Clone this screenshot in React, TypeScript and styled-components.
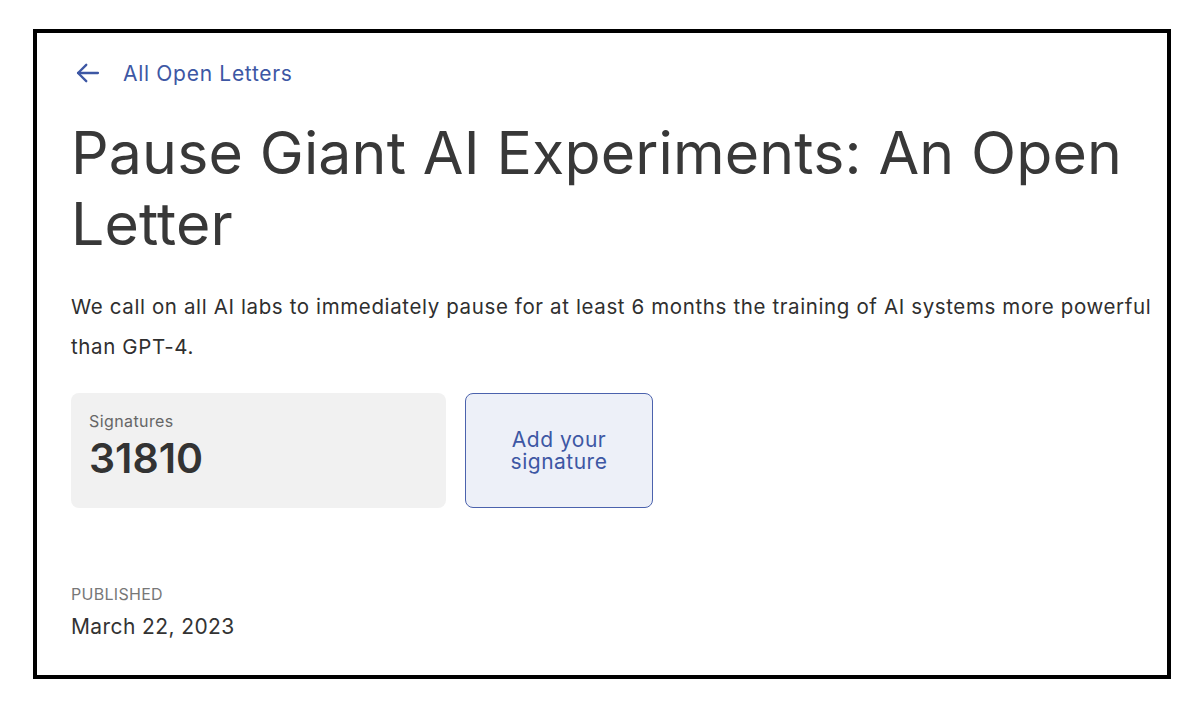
import React from 'react'
import styled, { createGlobalStyle } from 'styled-components'

const Global = createGlobalStyle`
  body {
    margin: 0;
    background: #ffffff;
    font-family: Inter, "Noto Sans", sans-serif;
  }
`

const Frame = styled.div`
  box-sizing: border-box;
  margin: 29px 0 0 33px;
  width: 1138px;
  height: 650px;
  border: 4px solid #000;
  background: #fff;
  padding: 26px 0 0 34px;
`

const BackLink = styled.a`
  display: flex;
  align-items: center;
  gap: 21px;
  color: #3d57a4;
  font-size: 21px;
  letter-spacing: 0.7px;
  text-decoration: none;
  height: 28px;
  padding-left: 3px;
`

const Title = styled.h1`
  margin: 30px 0 0;
  font-size: 59px;
  font-weight: 400;
  line-height: 71px;
  color: #383838;
  letter-spacing: 0.15px;
`

const Lead = styled.p`
  margin: 28px 0 0;
  font-size: 20.5px;
  letter-spacing: 0.62px;
  line-height: 40px;
  color: #2f2f2f;
`

const Actions = styled.div`
  display: flex;
  gap: 19px;
  margin-top: 26px;
`

const Counter = styled.div`
  box-sizing: border-box;
  width: 375px;
  height: 115px;
  background: #f1f1f1;
  border-radius: 8px;
  padding: 18px 18px;
`

const CounterLabel = styled.div`
  font-size: 16px;
  letter-spacing: 0.4px;
  color: #666;
  line-height: 20px;
`

const CounterValue = styled.div`
  font-size: 41px;
  font-weight: 600;
  color: #333;
  line-height: 48px;
  margin-top: 3px;
`

const SignButton = styled.button`
  box-sizing: border-box;
  width: 188px;
  height: 115px;
  background: #edf0f8;
  border: 1px solid #4b62ad;
  border-radius: 8px;
  color: #3d57a4;
  font-family: Inter, "Noto Sans", sans-serif;
  font-size: 21px;
  letter-spacing: 0.5px;
  line-height: 22px;
  padding: 0 16px;
  cursor: pointer;
`

const Meta = styled.div`
  margin-top: 76px;
`

const MetaLabel = styled.div`
  font-size: 16px;
  letter-spacing: 0.3px;
  color: #777;
  text-transform: uppercase;
  line-height: 20px;
`

const MetaValue = styled.div`
  font-size: 21px;
  letter-spacing: 0.4px;
  color: #333;
  line-height: 30px;
  margin-top: 8px;
`

function ArrowLeft() {
  return (
    <svg width="28" height="28" viewBox="0 0 24 24" fill="none" stroke="currentColor" strokeWidth="2" strokeLinecap="round" strokeLinejoin="round">
      <path d="M20.5 12H3.5" />
      <path d="M10.5 5l-7 7 7 7" />
    </svg>
  )
}

export default function App() {
  return (
    <>
      <Global />
      <Frame>
        <BackLink href="#">
          <ArrowLeft />
          <span>All Open Letters</span>
        </BackLink>
        <Title>Pause Giant AI Experiments: An Open Letter</Title>
        <Lead>
          We call on all AI labs to immediately pause for at least 6 months the training of AI systems more powerful than GPT-4.
        </Lead>
        <Actions>
          <Counter>
            <CounterLabel>Signatures</CounterLabel>
            <CounterValue>31810</CounterValue>
          </Counter>
          <SignButton>Add your signature</SignButton>
        </Actions>
        <Meta>
          <MetaLabel>Published</MetaLabel>
          <MetaValue>March 22, 2023</MetaValue>
        </Meta>
      </Frame>
    </>
  )
}
